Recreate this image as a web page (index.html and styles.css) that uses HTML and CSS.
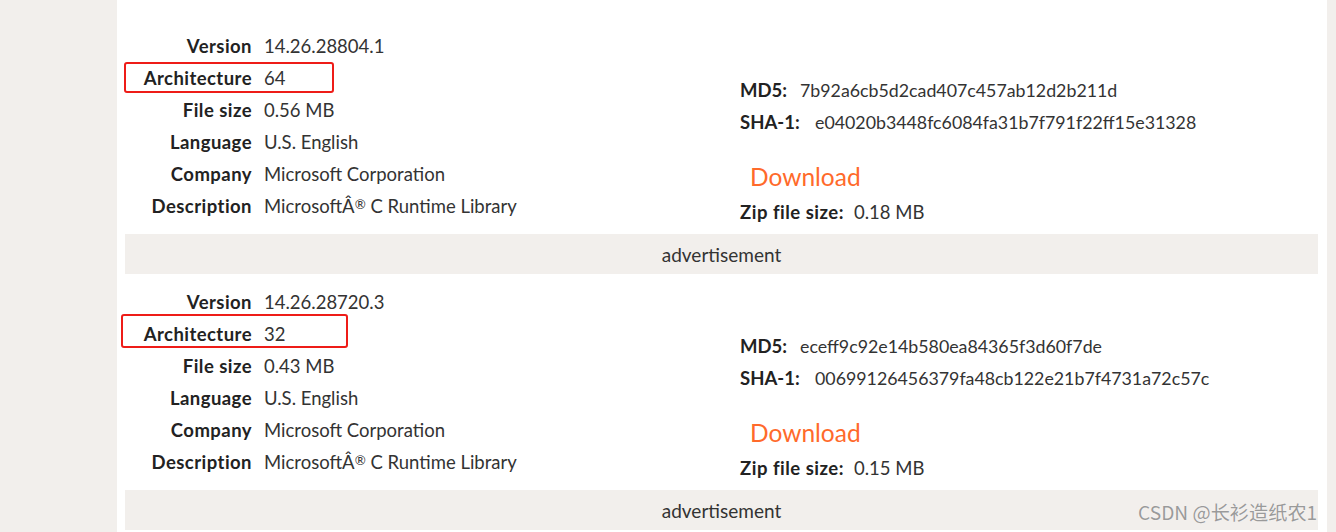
FILE: index.html
```html
<!DOCTYPE html>
<html>
<head>
<meta charset="utf-8">
<link rel="stylesheet" href="styles.css">
</head>
<body>
<div class="page">
  <div class="content">
    <section class="block first">
      <dl class="info">
        <dt>Version</dt><dd>14.26.28804.1</dd>
        <dt>Architecture</dt><dd>64</dd>
        <dt>File size</dt><dd>0.56 MB</dd>
        <dt>Language</dt><dd>U.S. English</dd>
        <dt>Company</dt><dd>Microsoft Corporation</dd>
        <dt>Description</dt><dd>MicrosoftÂ<span class="reg">®</span> C Runtime Library</dd>
      </dl>
      <div class="dl">
        <div class="hash"><b class="md5">MD5:</b><span>7b92a6cb5d2cad407c457ab12d2b211d</span></div>
        <div class="hash"><b class="sha">SHA-1:</b><span>e04020b3448fc6084fa31b7f791f22ff15e31328</span></div>
        <a class="download">Download</a>
        <div class="zip"><b>Zip file size:</b><span>0.18 MB</span></div>
      </div>
      <div class="mark mark1"></div>
    </section>
    <div class="ad">advertisement</div>
    <section class="block">
      <dl class="info">
        <dt>Version</dt><dd>14.26.28720.3</dd>
        <dt>Architecture</dt><dd>32</dd>
        <dt>File size</dt><dd>0.43 MB</dd>
        <dt>Language</dt><dd>U.S. English</dd>
        <dt>Company</dt><dd>Microsoft Corporation</dd>
        <dt>Description</dt><dd>MicrosoftÂ<span class="reg">®</span> C Runtime Library</dd>
      </dl>
      <div class="dl">
        <div class="hash"><b class="md5">MD5:</b><span>eceff9c92e14b580ea84365f3d60f7de</span></div>
        <div class="hash"><b class="sha">SHA-1:</b><span>00699126456379fa48cb122e21b7f4731a72c57c</span></div>
        <a class="download">Download</a>
        <div class="zip"><b>Zip file size:</b><span>0.15 MB</span></div>
      </div>
      <div class="mark mark2"></div>
    </section>
    <div class="ad">advertisement</div>
  </div>
  <div class="watermark">CSDN @长衫造纸农1</div>
</div>
</body>
</html>
```
FILE: styles.css
```css
html, body {
  margin: 0;
  padding: 0;
  background: #f2efec;
  height: 532px;
  overflow: hidden;
}
body {
  font-family: "Lato", "Noto Sans", sans-serif;
  font-size: 18.5px;
  color: #333;
}
.page {
  position: relative;
  width: 1336px;
  height: 532px;
}
.content {
  margin-left: 117px;
  width: 1210px;
  height: 532px;
  background: #fff;
  box-sizing: border-box;
  padding: 18px 9px 0 8px;
}
.block {
  position: relative;
  display: grid;
  grid-template-columns: 615px 1fr;
  padding: 12px 0 12px;
  height: 192px;
}
.info {
  margin: 0;
  display: grid;
  grid-template-columns: 127px 1fr;
  column-gap: 12px;
  grid-auto-rows: 32px;
  align-items: center;
}
.info dt {
  text-align: right;
  font-weight: 700;
  color: #222;
  letter-spacing: 0.45px;
  white-space: nowrap;
}
.info dd {
  margin: 0;
  white-space: nowrap;
}
.reg {
  font-size: 0.72em;
  vertical-align: 0.3em;
  line-height: 0;
}
.dl {
  padding-top: 44px;
}
.hash {
  height: 32px;
  display: flex;
  align-items: center;
  white-space: nowrap;
}
.hash span {
  font-size: 17.8px;
}
.hash b, .zip b {
  font-weight: 700;
  color: #222;
  flex: none;
}
.hash .md5 {
  width: 60px;
}
.hash .sha {
  width: 75px;
}
.download {
  display: block;
  margin: 22px 0 0 10px;
  font-size: 24.5px;
  line-height: 34px;
  color: #ff6a2b;
}
.zip {
  margin-top: 4px;
  height: 28px;
  display: flex;
  align-items: center;
}
.zip b {
  width: 114px;
  letter-spacing: 0.5px;
}
.ad {
  height: 40px;
  background: #f2efec;
  display: flex;
  align-items: center;
  justify-content: center;
  color: #333;
  font-size: 19px;
}
.mark {
  position: absolute;
  border: 2px solid #ee1c18;
  border-radius: 3px;
  box-sizing: border-box;
}
.mark1 {
  left: -1px;
  top: 44px;
  width: 210px;
  height: 31px;
}
.mark2 {
  left: -4px;
  top: 40px;
  width: 227px;
  height: 34px;
}
.watermark {
  position: absolute;
  left: 1138px;
  top: 499px;
  font-family: "Noto Sans CJK SC", "Noto Sans", sans-serif;
  font-size: 19.2px;
  line-height: 26px;
  color: #9a9a9a;
  text-shadow: 0 0 1px #fff;
}
```
